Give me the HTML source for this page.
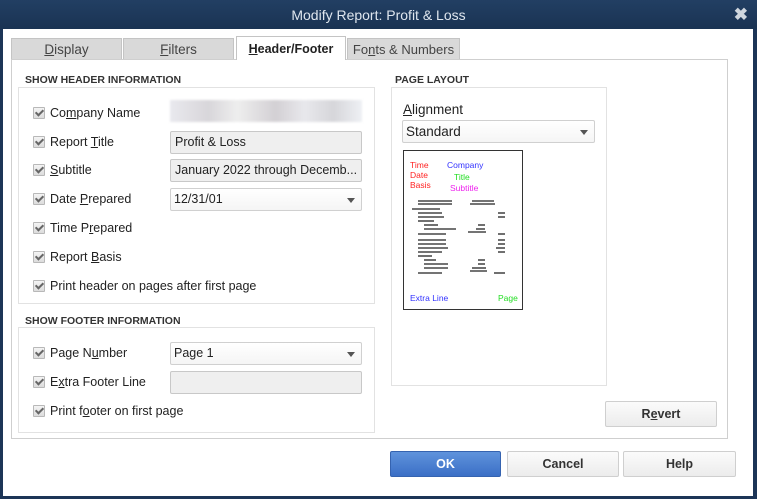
<!DOCTYPE html>
<html><head><meta charset="utf-8"><style>
*{box-sizing:border-box;margin:0;padding:0}
body{width:757px;height:499px;overflow:hidden;background:#1c3557;font-family:"Liberation Sans",Arial,sans-serif;font-size:13px;color:#222;position:relative}
.a{position:absolute}
#win{left:3px;top:29px;width:750px;height:467px;background:#fff}
.title{left:0;top:0;width:757px;height:29px;line-height:31px;text-align:center;color:#dfe6ee;font-size:14px;background:linear-gradient(#223f63,#1a3353)}
.x{right:9px;top:5px;color:#cfd6de;font-size:17px;font-weight:bold}
.tab{height:22px;top:38px;background:#d9d9d9;border:1px solid #c4c4c4;border-bottom:none;text-align:center;line-height:21px;font-size:13.5px;color:#444;white-space:nowrap}
.tab.act{background:#fff;top:36px;height:24px;font-weight:bold;color:#222;font-size:12.5px;line-height:25px;z-index:2}
#panel{left:11px;top:59px;width:717px;height:380px;border:1px solid #cfcfcf;background:#fff}
.grp{border:1px solid #e2e2e2;background:#fff}
.gt{font-size:10.5px;font-weight:bold;color:#333;background:#fff;padding:0 5px 0 3px}
.cb{width:12px;height:12px;border:1px solid #b8b8b8;background:linear-gradient(#f4f4f4,#dcdcdc);border-radius:1px}
.cb:after{content:"";position:absolute;left:3px;top:0px;width:3px;height:6px;border:solid #666;border-width:0 2px 2px 0;transform:rotate(45deg)}
.lb{font-size:12.5px;color:#222}
.in{height:23px;border:1px solid #c8c8c8;background:#efefef;padding-left:4px;line-height:21px;font-size:12.5px;border-radius:2px;white-space:nowrap;overflow:hidden}
.sel{height:23px;border:1px solid #d0d0d0;background:linear-gradient(#fff,#f5f5f5);padding-left:3px;line-height:21px;font-size:12.5px;border-radius:2px}
.sel:after{content:"";position:absolute;right:6px;top:9px;border:4px solid transparent;border-top:5px solid #555}
.btn{height:26px;border:1px solid #cfcfcf;background:linear-gradient(#fbfbfb,#ececec);text-align:center;line-height:24px;font-weight:bold;font-size:12.5px;color:#333;border-radius:2px}
.pv{font-size:8.5px}
u{text-decoration:underline}
</style></head><body>
<div class="a title">Modify Report: Profit &amp; Loss</div>
<div class="a x">✖</div>
<div class="a" id="win"></div>
<div class="a tab" style="left:11px;width:111px"><u>D</u>isplay</div>
<div class="a tab" style="left:123px;width:111px"><u>F</u>ilters</div>
<div class="a tab act" style="left:236px;width:110px"><u>H</u>eader/Footer</div>
<div class="a tab" style="left:347px;width:113px;font-size:13px">Fo<u>n</u>ts &amp; Numbers</div>
<div class="a" id="panel"></div>

<div class="a grp" style="left:18px;top:87px;width:357px;height:217px"></div>
<div class="a gt" style="left:22px;top:74px">SHOW HEADER INFORMATION</div>
<div class="a grp" style="left:18px;top:327px;width:357px;height:106px"></div>
<div class="a gt" style="left:22px;top:315px">SHOW FOOTER INFORMATION</div>

<div class="a cb" style="left:33px;top:107px"></div><div class="a lb" style="left:50px;top:106px">Co<u>m</u>pany Name</div>
<div class="a" style="left:170px;top:100px;width:192px;height:22px;background:linear-gradient(90deg,#e9e9ee,#d8d6da 20%,#eee 35%,#d3d0d4 55%,#e8e8ec 70%,#d6d6da 85%,#eef0f4);filter:blur(1px)"></div>
<div class="a cb" style="left:33px;top:136px"></div><div class="a lb" style="left:50px;top:135px">Report <u>T</u>itle</div>
<div class="a in" style="left:170px;top:131px;width:192px">Profit &amp; Loss</div>
<div class="a cb" style="left:33px;top:164px"></div><div class="a lb" style="left:50px;top:163px"><u>S</u>ubtitle</div>
<div class="a in" style="left:170px;top:159px;width:192px">January 2022 through Decemb...</div>
<div class="a cb" style="left:33px;top:193px"></div><div class="a lb" style="left:50px;top:192px">Date <u>P</u>repared</div>
<div class="a sel" style="left:170px;top:188px;width:192px">12/31/01</div>
<div class="a cb" style="left:33px;top:222px"></div><div class="a lb" style="left:50px;top:221px">Time P<u>r</u>epared</div>
<div class="a cb" style="left:33px;top:251px"></div><div class="a lb" style="left:50px;top:250px">Report <u>B</u>asis</div>
<div class="a cb" style="left:33px;top:280px"></div><div class="a lb" style="left:50px;top:279px">Print header on pa<u>g</u>es after first page</div>

<div class="a cb" style="left:33px;top:347px"></div><div class="a lb" style="left:50px;top:346px">Page N<u>u</u>mber</div>
<div class="a sel" style="left:170px;top:342px;width:192px">Page 1</div>
<div class="a cb" style="left:33px;top:376px"></div><div class="a lb" style="left:50px;top:375px">E<u>x</u>tra Footer Line</div>
<div class="a in" style="left:170px;top:371px;width:192px"></div>
<div class="a cb" style="left:33px;top:405px"></div><div class="a lb" style="left:50px;top:404px">Print f<u>o</u>oter on first page</div>

<div class="a grp" style="left:391px;top:87px;width:216px;height:299px"></div>
<div class="a gt" style="left:392px;top:74px">PAGE LAYOUT</div>
<div class="a lb" style="left:403px;top:102px;font-size:13.5px"><u>A</u>lignment</div>
<div class="a sel" style="left:402px;top:120px;width:193px;font-size:13.5px">Standard</div>
<div class="a" style="left:403px;top:150px;width:120px;height:160px;border:1px solid #333;background:#fff">
 <div class="a pv" style="left:6px;top:9px;color:#f22;line-height:10px">Time<br>Date<br>Basis</div>
 <div class="a pv" style="left:43px;top:9px;color:#33f">Company</div>
 <div class="a pv" style="left:50px;top:21px;color:#2d2">Title</div>
 <div class="a pv" style="left:46px;top:32px;color:#e2e">Subtitle</div>
 <svg class="a" style="left:6px;top:47px" width="108" height="92">
  <g stroke="#222" stroke-width="1.3">
   <line x1="8" y1="3" x2="42" y2="3"/><line x1="62" y1="3" x2="84" y2="3"/>
   <line x1="8" y1="6" x2="42" y2="6"/><line x1="60" y1="6" x2="85" y2="6"/>
   <line x1="2" y1="11" x2="30" y2="11"/>
   <line x1="8" y1="15" x2="32" y2="15"/><line x1="88" y1="15" x2="95" y2="15"/>
   <line x1="8" y1="19" x2="34" y2="19"/><line x1="88" y1="19" x2="95" y2="19"/>
   <line x1="8" y1="23" x2="24" y2="23"/>
   <line x1="14" y1="27" x2="28" y2="27"/><line x1="68" y1="27" x2="75" y2="27"/>
   <line x1="14" y1="31" x2="46" y2="31"/><line x1="66" y1="31" x2="75" y2="31"/><line x1="58" y1="34" x2="76" y2="34"/>
   <line x1="8" y1="36" x2="36" y2="36"/><line x1="88" y1="36" x2="95" y2="36"/>
   <line x1="8" y1="42" x2="36" y2="42"/><line x1="88" y1="42" x2="95" y2="42"/>
   <line x1="8" y1="46" x2="36" y2="46"/><line x1="88" y1="46" x2="95" y2="46"/>
   <line x1="8" y1="50" x2="38" y2="50"/><line x1="86" y1="50" x2="95" y2="50"/>
   <line x1="8" y1="54" x2="32" y2="54"/><line x1="88" y1="54" x2="95" y2="54"/>
   <line x1="8" y1="58" x2="22" y2="58"/>
   <line x1="14" y1="62" x2="26" y2="62"/><line x1="68" y1="62" x2="75" y2="62"/>
   <line x1="14" y1="66" x2="38" y2="66"/><line x1="68" y1="66" x2="75" y2="66"/>
   <line x1="14" y1="70" x2="38" y2="70"/><line x1="62" y1="70" x2="76" y2="70"/><line x1="60" y1="73" x2="77" y2="73"/>
   <line x1="8" y1="75" x2="32" y2="75"/><line x1="84" y1="75" x2="95" y2="75"/>
  </g>
 </svg>
 <div class="a pv" style="left:6px;top:142px;color:#33f">Extra Line</div>
 <div class="a pv" style="left:94px;top:142px;color:#2d2">Page</div>
</div>

<div class="a btn" style="left:605px;top:401px;width:112px">R<u>e</u>vert</div>
<div class="a btn" style="left:390px;top:451px;width:111px;background:linear-gradient(#5f93dc,#3b6fc6);border-color:#3563b0;color:#fff">OK</div>
<div class="a btn" style="left:507px;top:451px;width:112px">Cancel</div>
<div class="a btn" style="left:623px;top:451px;width:113px">Help</div>
</body></html>
